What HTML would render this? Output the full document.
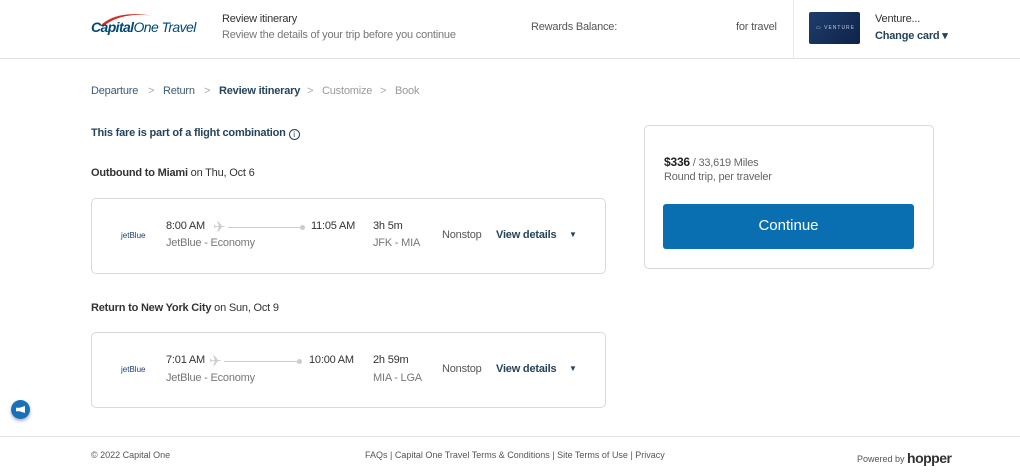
<!DOCTYPE html>
<html><head><meta charset="utf-8"><style>
*{margin:0;padding:0;box-sizing:border-box}
body{width:1020px;height:472px;background:#fff;font-family:"Liberation Sans",sans-serif;position:relative;overflow:hidden;color:#333}
.a{position:absolute;white-space:nowrap}
.hdr{position:absolute;left:0;top:0;width:1020px;height:59px;border-bottom:1px solid #e2e2e2}
.card{position:absolute;left:91px;width:515px;height:76px;border:1px solid #d9d9d9;border-radius:5px}
.f11{font-size:11px;letter-spacing:-0.2px}
.g{color:#555}
.b{color:#26435c;font-weight:bold}
.line{position:absolute;height:1px;background:#ccc}
.sep{color:#aaa}
</style></head><body>
<div class="hdr"></div>
<div class="a" style="left:793px;top:0;width:1px;height:58px;background:#e6e6e6"></div>
<svg class="a" style="left:92px;top:10px" width="64" height="18"><path d="M8 16 C20 4 40 2 62 6 C42 3 24 6 12 16Z" fill="#d03027"/></svg>
<div class="a" style="left:91px;top:19px;font-size:14px;font-weight:bold;font-style:italic;color:#004977;letter-spacing:-0.6px">Capital<span style="font-weight:normal">One</span> <span style="font-weight:normal;color:#004977">Travel</span></div>
<div class="a f11" style="left:222px;top:13px;color:#333">Review itinerary</div>
<div class="a f11" style="left:222px;top:29px;color:#777">Review the details of your trip before you continue</div>
<div class="a f11" style="left:531px;top:21px;color:#555">Rewards Balance:</div>
<div class="a f11" style="left:736px;top:21px;color:#555">for travel</div>
<div class="a" style="left:809px;top:12px;width:51px;height:32px;background:linear-gradient(135deg,#1e3d6e,#0e2347);border-radius:2px"><div class="a" style="left:7px;top:13px;font-size:5px;color:#bcd;letter-spacing:1px">▭ VENTURE</div></div>
<div class="a f11" style="left:875px;top:13px;color:#333">Venture...</div>
<div class="a f11 b" style="left:875px;top:29px;color:#26435c">Change card ▾</div>

<div class="a f11" style="left:91px;top:85px;color:#3b5a74">Departure</div>
<div class="a f11 sep" style="left:148px;top:85px">&gt;</div>
<div class="a f11" style="left:163px;top:85px;color:#3b5a74">Return</div>
<div class="a f11 sep" style="left:204px;top:85px">&gt;</div>
<div class="a f11 b" style="left:219px;top:85px">Review itinerary</div>
<div class="a f11 sep" style="left:307px;top:85px">&gt;</div>
<div class="a f11" style="left:322px;top:85px;color:#999">Customize</div>
<div class="a f11 sep" style="left:380px;top:85px">&gt;</div>
<div class="a f11" style="left:395px;top:85px;color:#999">Book</div>

<div class="a f11 b" style="left:91px;top:127px">This fare is part of a flight combination <span style="display:inline-block;width:11px;height:11px;border:1px solid #26435c;border-radius:50%;font-size:8px;text-align:center;line-height:9px;font-weight:normal;vertical-align:-1px">i</span></div>
<div class="a f11" style="left:91px;top:167px;color:#333"><b>Outbound to Miami</b> on Thu, Oct 6</div>
<div class="a f11" style="left:91px;top:302px;color:#333"><b>Return to New York City</b> on Sun, Oct 9</div>

<div class="card" style="top:198px"></div>
<div class="card" style="top:332px"></div>

<div class="a" style="left:121px;top:231px;font-size:8px;color:#1a3e7a">jetBlue</div>
<div class="a f11" style="left:166px;top:220px">8:00 AM</div>
<div class="a f11 g" style="left:166px;top:237px;color:#777">JetBlue - Economy</div>
<div class="a" style="left:213px;top:218px;color:#ccc;font-size:15px">✈</div>
<div class="line" style="left:228px;top:227px;width:74px"></div>
<div class="a" style="left:300px;top:225px;width:5px;height:5px;border-radius:50%;background:#ccc"></div>
<div class="a f11" style="left:311px;top:220px">11:05 AM</div>
<div class="a f11" style="left:373px;top:220px">3h 5m</div>
<div class="a f11" style="left:373px;top:237px;color:#777">JFK - MIA</div>
<div class="a f11" style="left:442px;top:229px;color:#555">Nonstop</div>
<div class="a f11 b" style="left:496px;top:229px">View details</div>
<div class="a" style="left:569px;top:230px;font-size:8px;color:#26435c">▼</div>

<div class="a" style="left:121px;top:365px;font-size:8px;color:#1a3e7a">jetBlue</div>
<div class="a f11" style="left:166px;top:354px">7:01 AM</div>
<div class="a f11" style="left:166px;top:372px;color:#777">JetBlue - Economy</div>
<div class="a" style="left:209px;top:352px;color:#ccc;font-size:15px">✈</div>
<div class="line" style="left:224px;top:361px;width:74px"></div>
<div class="a" style="left:297px;top:359px;width:5px;height:5px;border-radius:50%;background:#ccc"></div>
<div class="a f11" style="left:309px;top:354px">10:00 AM</div>
<div class="a f11" style="left:373px;top:354px">2h 59m</div>
<div class="a f11" style="left:373px;top:372px;color:#777">MIA - LGA</div>
<div class="a f11" style="left:442px;top:363px;color:#555">Nonstop</div>
<div class="a f11 b" style="left:496px;top:363px">View details</div>
<div class="a" style="left:569px;top:364px;font-size:8px;color:#26435c">▼</div>

<div class="a" style="left:644px;top:125px;width:290px;height:144px;border:1px solid #d9d9d9;border-radius:5px"></div>
<div class="a f11" style="left:664px;top:155px;color:#666"><b style="color:#222;font-size:12px">$336</b> / 33,619 Miles</div>
<div class="a f11" style="left:664px;top:171px;color:#666">Round trip, per traveler</div>
<div class="a" style="left:663px;top:204px;width:251px;height:45px;background:#0a6fb0;border-radius:3px;color:#fff;font-size:15px;text-align:center;line-height:43px">Continue</div>

<div class="a" style="left:11px;top:400px;width:19px;height:19px;border-radius:50%;background:#1671b8;box-shadow:0 2px 3px #aac"><div class="a" style="left:5px;top:6px;width:9px;height:7px;background:#fff;clip-path:polygon(0 25%,40% 25%,100% 0,100% 100%,40% 75%,0 75%)"></div></div>

<div class="a" style="left:0;top:436px;width:1020px;height:1px;background:#e2e2e2"></div>
<div class="a" style="left:91px;top:450px;font-size:9px;color:#555">© 2022 Capital One</div>
<div class="a" style="left:365px;top:450px;font-size:9px;color:#555">FAQs | Capital One Travel Terms &amp; Conditions | Site Terms of Use | Privacy</div>
<div class="a" style="left:857px;top:450px;font-size:9px;color:#555">Powered by <span style="font-size:14px;color:#333;letter-spacing:-0.5px;vertical-align:-1px;font-weight:600">hopper</span></div>
</body></html>
